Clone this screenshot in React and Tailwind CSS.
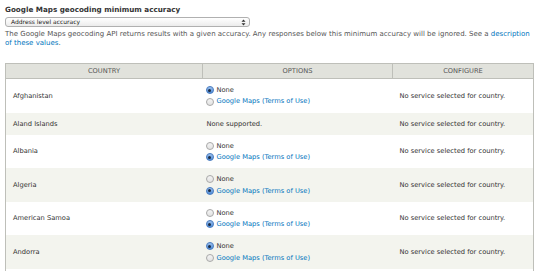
import React from 'react';

const rows = [
  { country: 'Afghanistan', selected: 'none' },
  { country: 'Aland Islands', selected: null },
  { country: 'Albania', selected: 'google' },
  { country: 'Algeria', selected: 'google' },
  { country: 'American Samoa', selected: 'google' },
  { country: 'Andorra', selected: 'none' },
  { country: 'Angola', selected: 'google' },
];

function Radio({ checked }) {
  return checked ? (
    <span className="inline-flex items-center justify-center w-[8px] h-[8px] rounded-full border border-[#4f7fc0] bg-gradient-to-b from-[#9cc1ee] to-[#4a8ad8] mr-[3px] shrink-0">
      <span className="w-[3px] h-[3px] rounded-full bg-[#1c2c44]" />
    </span>
  ) : (
    <span className="inline-block w-[8px] h-[8px] rounded-full border border-[#a9a9a9] bg-gradient-to-b from-[#f4f4f4] to-[#e2e2e2] mr-[3px] shrink-0" />
  );
}

export default function App() {
  return (
    <div className="w-[535px] h-[271px] overflow-hidden bg-white px-[5px] pt-[5px] text-[#333] font-['DejaVu_Sans',sans-serif]">
      {/* Accuracy setting */}
      <div className="text-[7.2px] font-bold leading-[10px] text-[#333]">Google Maps geocoding minimum accuracy</div>
      <div className="mt-[2px] w-[245px] h-[10px] rounded-[3px] border border-[#b0b0b0] bg-gradient-to-b from-white to-[#ececec] flex items-center justify-between pl-[5px] pr-[3px]">
        <span className="text-[6px] leading-none text-[#222]">Address level accuracy</span>
        <svg width="5" height="7" viewBox="0 0 5 7">
          <path d="M2.5 0.5 L4.5 2.8 L0.5 2.8 Z M2.5 6.5 L4.5 4.2 L0.5 4.2 Z" fill="#333" />
        </svg>
      </div>
      <p className="mt-[3px] text-[7px] leading-[8.5px] text-[#555]">
        The Google Maps geocoding API returns results with a given accuracy. Any responses below this minimum accuracy will be ignored. See a <span className="text-[#0074bd]">description of these values</span>.
      </p>

      {/* Country table */}
      <table className="mt-[16px] w-[528px] border-collapse text-[6.7px] table-fixed">
        <colgroup>
          <col className="w-[197px]" />
          <col className="w-[190px]" />
          <col className="w-[141px]" />
        </colgroup>
        <thead>
          <tr className="bg-[#e1e2dc] text-[#555] uppercase">
            <th className="h-[15px] p-0 font-normal leading-[13px] text-center border border-[#bebfb9]">Country</th>
            <th className="h-[15px] p-0 font-normal leading-[13px] text-center border border-[#bebfb9]">Options</th>
            <th className="h-[15px] p-0 font-normal leading-[13px] text-center border border-[#bebfb9]">Configure</th>
          </tr>
        </thead>
        <tbody>
          {rows.map((row, i) => (
            <tr key={row.country} className={`border-x border-[#bebfb9] ${i % 2 ? 'bg-[#f3f4ee]' : 'bg-white'}`}>
              <td className="pl-[7px] py-[6px] align-middle">{row.country}</td>
              <td className="pl-[3px] py-[6px] align-middle">
                {row.selected ? (
                  <div className="flex flex-col gap-[1.5px]">
                    <label className="flex items-center h-[10px]">
                      <Radio checked={row.selected === 'none'} />
                      <span>None</span>
                    </label>
                    <label className="flex items-center h-[10px] text-[#0074bd]">
                      <Radio checked={row.selected === 'google'} />
                      <span>Google Maps (Terms of Use)</span>
                    </label>
                  </div>
                ) : (
                  <div className="h-[10px] flex items-center pl-[1px]">None supported.</div>
                )}
              </td>
              <td className="pl-[7px] py-[6px] align-middle">No service selected for country.</td>
            </tr>
          ))}
        </tbody>
      </table>
    </div>
  );
}
